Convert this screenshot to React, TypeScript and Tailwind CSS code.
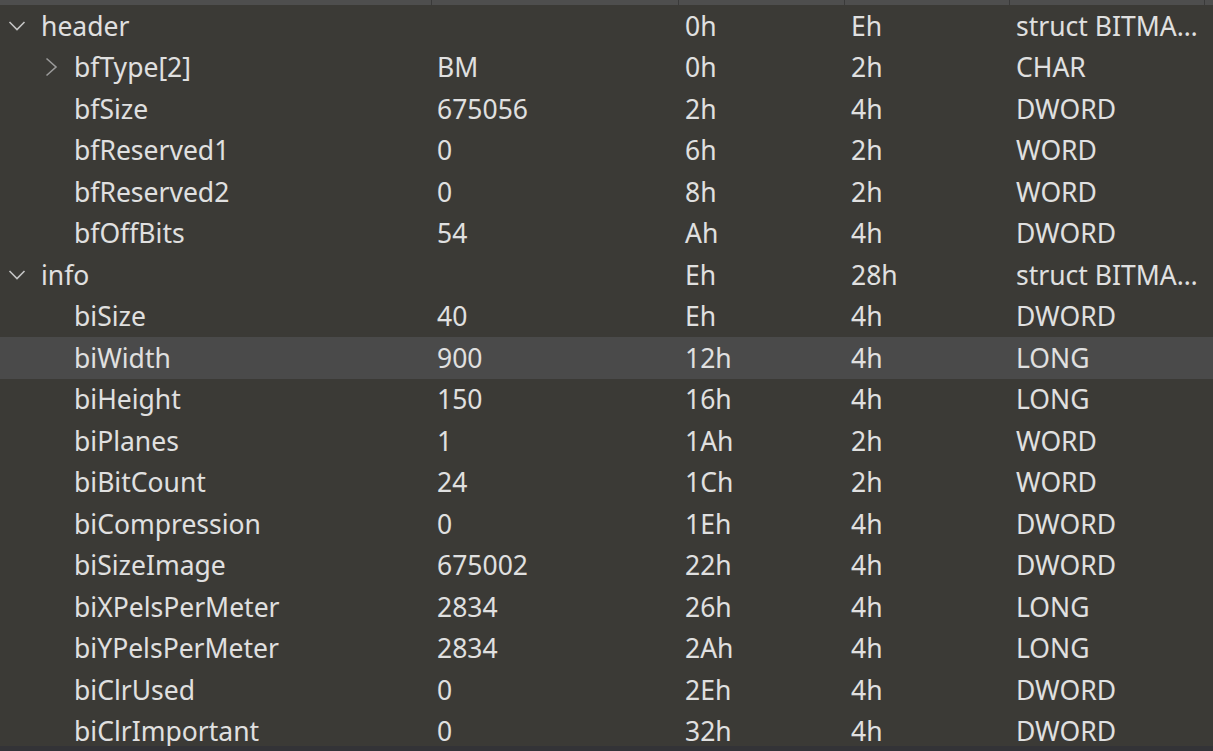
import React from "react";

type Row = { name: string; value: string; start: string; size: string; type: string; level: number; chevron?: "down" | "right"; selected?: boolean };

const rows: Row[] = [
  { name: "header", value: "", start: "0h", size: "Eh", type: "struct BITMAPFILEHEADER", level: 0, chevron: "down" },
  { name: "bfType[2]", value: "BM", start: "0h", size: "2h", type: "CHAR", level: 1, chevron: "right" },
  { name: "bfSize", value: "675056", start: "2h", size: "4h", type: "DWORD", level: 1 },
  { name: "bfReserved1", value: "0", start: "6h", size: "2h", type: "WORD", level: 1 },
  { name: "bfReserved2", value: "0", start: "8h", size: "2h", type: "WORD", level: 1 },
  { name: "bfOffBits", value: "54", start: "Ah", size: "4h", type: "DWORD", level: 1 },
  { name: "info", value: "", start: "Eh", size: "28h", type: "struct BITMAPINFOHEADER", level: 0, chevron: "down" },
  { name: "biSize", value: "40", start: "Eh", size: "4h", type: "DWORD", level: 1 },
  { name: "biWidth", value: "900", start: "12h", size: "4h", type: "LONG", level: 1, selected: true },
  { name: "biHeight", value: "150", start: "16h", size: "4h", type: "LONG", level: 1 },
  { name: "biPlanes", value: "1", start: "1Ah", size: "2h", type: "WORD", level: 1 },
  { name: "biBitCount", value: "24", start: "1Ch", size: "2h", type: "WORD", level: 1 },
  { name: "biCompression", value: "0", start: "1Eh", size: "4h", type: "DWORD", level: 1 },
  { name: "biSizeImage", value: "675002", start: "22h", size: "4h", type: "DWORD", level: 1 },
  { name: "biXPelsPerMeter", value: "2834", start: "26h", size: "4h", type: "LONG", level: 1 },
  { name: "biYPelsPerMeter", value: "2834", start: "2Ah", size: "4h", type: "LONG", level: 1 },
  { name: "biClrUsed", value: "0", start: "2Eh", size: "4h", type: "DWORD", level: 1 },
  { name: "biClrImportant", value: "0", start: "32h", size: "4h", type: "DWORD", level: 1 },
];

function Chevron({ dir }: { dir: "down" | "right" }) {
  return dir === "down" ? (
    <svg width="18" height="12" viewBox="0 0 18 12" className="shrink-0">
      <path d="M1.5 2 L9 9.5 L16.5 2" fill="none" stroke="#c4c4c4" strokeWidth="1.6" />
    </svg>
  ) : (
    <svg width="16" height="20" viewBox="0 0 16 20" className="shrink-0">
      <path d="M2.5 1.5 L12 10 L2.5 18.5" fill="none" stroke="#9a9a9a" strokeWidth="1.6" />
    </svg>
  );
}

export default function App() {
  return (
    <div
      className="relative w-[1213px] h-[751px] overflow-hidden bg-[#3b3a36] text-[#e0e0e0] text-[26.5px]"
      style={{ fontFamily: '"Noto Sans", "Open Sans", sans-serif' }}
    >
      <div className="flex h-[5px] bg-[#4e4e4e]">
        <div className="w-[432px] border-r border-[#3a3a3a]" />
        <div className="w-[247px] border-r border-[#3a3a3a]" />
        <div className="w-[166px] border-r border-[#3a3a3a]" />
        <div className="w-[165px] border-r border-[#3a3a3a]" />
        <div className="w-[195px] border-r border-[#3a3a3a]" />
        <div className="flex-1" />
      </div>
      {rows.map((r) => (
        <div
          key={r.name}
          className={`flex items-center h-[41.5px] leading-[36px] ${r.selected ? "bg-[#4a4a4a]" : ""}`}
        >
          <div className={`w-[432px] flex items-center ${r.level === 0 ? "pl-[8px]" : "pl-[44px]"}`}>
            <div className={`flex items-center ${r.level === 0 ? "w-[33px]" : "w-[30px]"}`}>
              {r.chevron && <Chevron dir={r.chevron} />}
            </div>
            <span className="whitespace-nowrap">{r.name}</span>
          </div>
          <div className="w-[247px] pl-[5px]">{r.value}</div>
          <div className="w-[166px] pl-[6px]">{r.start}</div>
          <div className="w-[165px] pl-[6px]">{r.size}</div>
          <div className="w-[192px] pl-[6px] truncate">{r.type}</div>
        </div>
      ))}
      <div className="absolute left-0 right-0 bottom-0 h-[5px] bg-[#333337]" />
    </div>
  );
}
